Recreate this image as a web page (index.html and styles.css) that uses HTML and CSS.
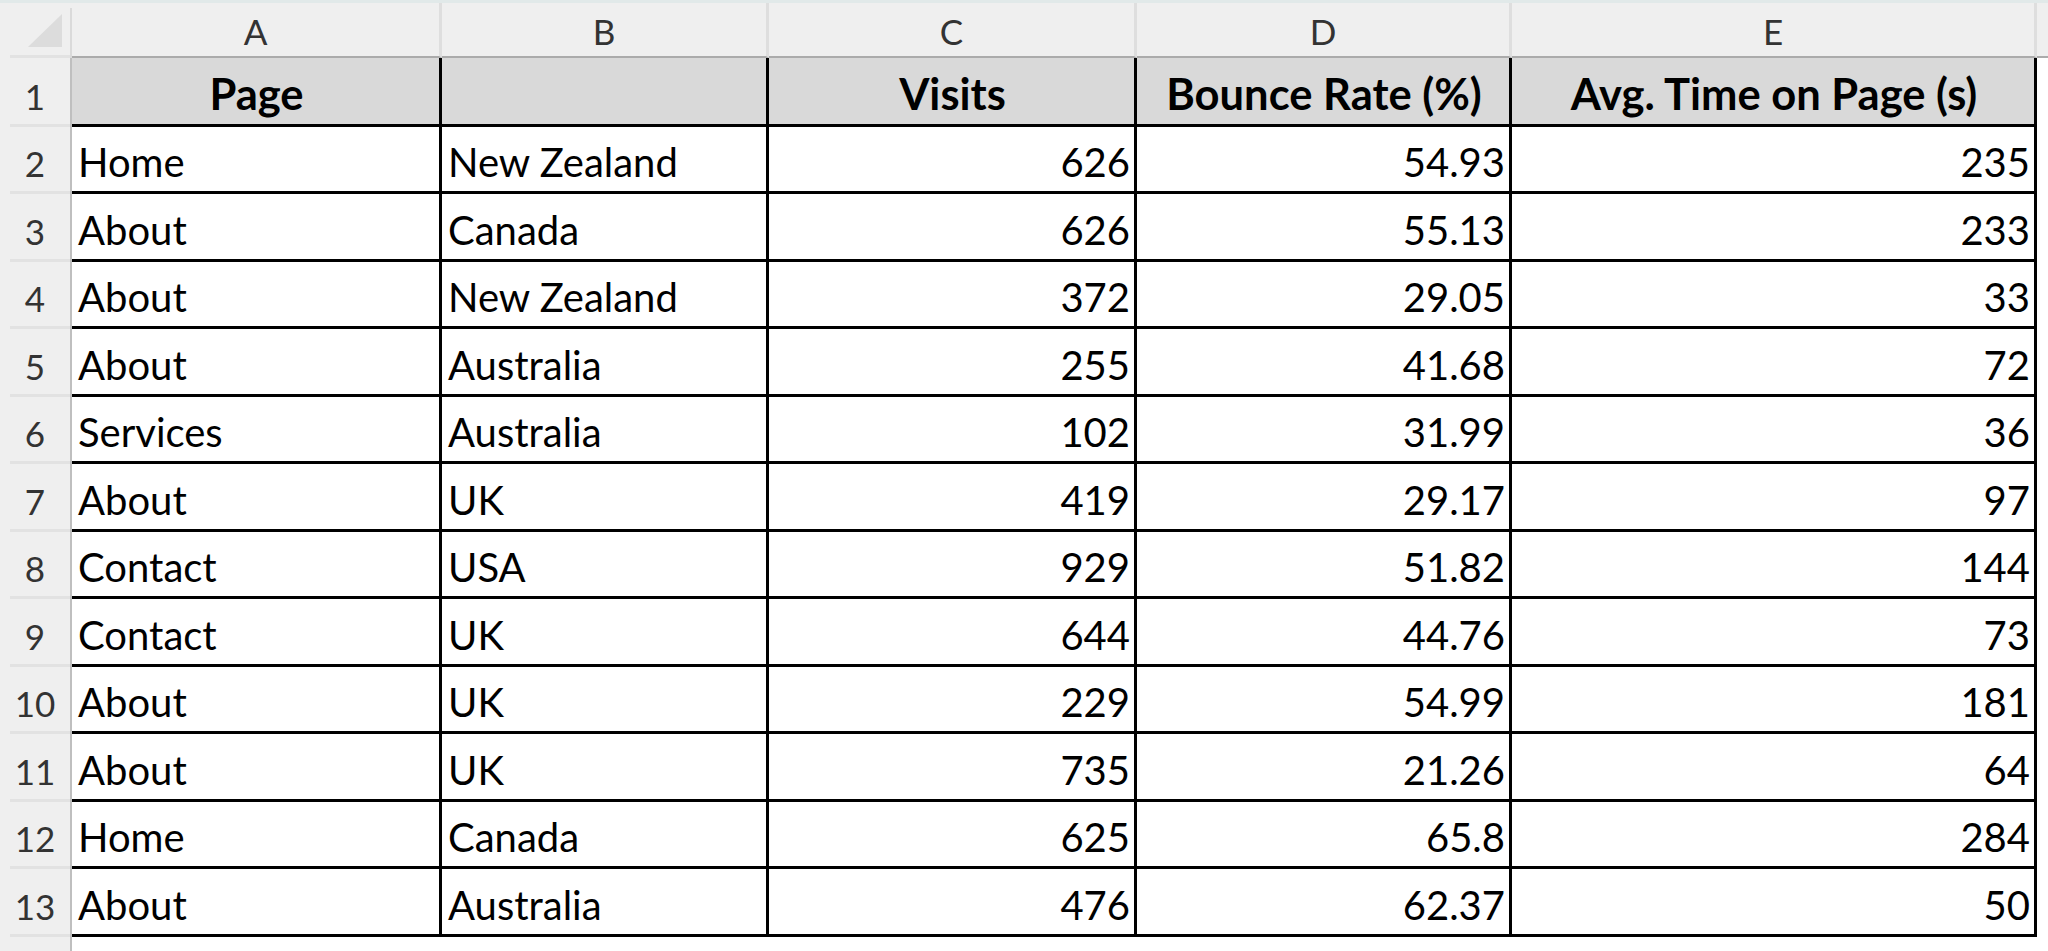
FILE: index.html
```html
<!DOCTYPE html>
<html lang="en">
<head>
<meta charset="utf-8">
<title>Sheet</title>
<link rel="stylesheet" href="styles.css">
</head>
<body>
<div class="strip"></div>
<div class="sheet">
  <div class="corner">
    <svg class="corner-art" width="72" height="55" viewBox="0 0 72 55">
      <polygon points="28,44 62,11 62,44" fill="#dcdcdc"/>
      <rect x="10" y="52" width="60" height="3" fill="#e2e2e2"/>
      <rect x="70" y="5" width="2" height="50" fill="#dadada"/>
    </svg>
  </div>
  <div class="colhead">A</div>
  <div class="colhead">B</div>
  <div class="colhead">C</div>
  <div class="colhead">D</div>
  <div class="colhead">E</div>
  <div class="colhead filler"></div>

  <div class="rowhead">1</div>
  <div class="cell th">Page</div>
  <div class="cell th"></div>
  <div class="cell th">Visits</div>
  <div class="cell th">Bounce Rate (%)</div>
  <div class="cell th">Avg. Time on Page (s)</div>
  <div class="blank"></div>

  <div class="rowhead">2</div>
  <div class="cell">Home</div><div class="cell">New Zealand</div>
  <div class="cell num">626</div><div class="cell num">54.93</div><div class="cell num">235</div>
  <div class="blank"></div>

  <div class="rowhead">3</div>
  <div class="cell">About</div><div class="cell">Canada</div>
  <div class="cell num">626</div><div class="cell num">55.13</div><div class="cell num">233</div>
  <div class="blank"></div>

  <div class="rowhead">4</div>
  <div class="cell">About</div><div class="cell">New Zealand</div>
  <div class="cell num">372</div><div class="cell num">29.05</div><div class="cell num">33</div>
  <div class="blank"></div>

  <div class="rowhead">5</div>
  <div class="cell">About</div><div class="cell">Australia</div>
  <div class="cell num">255</div><div class="cell num">41.68</div><div class="cell num">72</div>
  <div class="blank"></div>

  <div class="rowhead">6</div>
  <div class="cell">Services</div><div class="cell">Australia</div>
  <div class="cell num">102</div><div class="cell num">31.99</div><div class="cell num">36</div>
  <div class="blank"></div>

  <div class="rowhead">7</div>
  <div class="cell">About</div><div class="cell">UK</div>
  <div class="cell num">419</div><div class="cell num">29.17</div><div class="cell num">97</div>
  <div class="blank"></div>

  <div class="rowhead">8</div>
  <div class="cell">Contact</div><div class="cell">USA</div>
  <div class="cell num">929</div><div class="cell num">51.82</div><div class="cell num">144</div>
  <div class="blank"></div>

  <div class="rowhead">9</div>
  <div class="cell">Contact</div><div class="cell">UK</div>
  <div class="cell num">644</div><div class="cell num">44.76</div><div class="cell num">73</div>
  <div class="blank"></div>

  <div class="rowhead">10</div>
  <div class="cell">About</div><div class="cell">UK</div>
  <div class="cell num">229</div><div class="cell num">54.99</div><div class="cell num">181</div>
  <div class="blank"></div>

  <div class="rowhead">11</div>
  <div class="cell">About</div><div class="cell">UK</div>
  <div class="cell num">735</div><div class="cell num">21.26</div><div class="cell num">64</div>
  <div class="blank"></div>

  <div class="rowhead">12</div>
  <div class="cell">Home</div><div class="cell">Canada</div>
  <div class="cell num">625</div><div class="cell num">65.8</div><div class="cell num">284</div>
  <div class="blank"></div>

  <div class="rowhead">13</div>
  <div class="cell">About</div><div class="cell">Australia</div>
  <div class="cell num">476</div><div class="cell num">62.37</div><div class="cell num">50</div>
  <div class="blank"></div>

  <div class="rowhead tail"></div>
  <div class="blank tail-fill"></div>
</div>
</body>
</html>
```
FILE: styles.css
```css
html, body {
  margin: 0;
  padding: 0;
}

body {
  width: 2048px;
  height: 951px;
  overflow: hidden;
  display: flex;
  flex-direction: column;
  background: #ffffff;
  font-family: Lato, "Liberation Sans", sans-serif;
  color: #000;
}

.strip {
  flex: none;
  height: 3px;
  background: #e1e9e9;
}

.sheet {
  flex: 1;
  display: grid;
  grid-template-columns: 72px 370px 327px 368px 375px 525px 1fr;
  grid-template-rows: 55px 68.5px repeat(12, 67.5px) 1fr;
}

.corner {
  background: #efefef;
}

.corner-art {
  display: block;
}

.colhead {
  box-sizing: border-box;
  background: #efefef;
  border-right: 3px solid #dedede;
  border-bottom: 2px solid #ababab;
  display: flex;
  align-items: flex-end;
  justify-content: center;
  padding-bottom: 7px;
  font-size: 35px;
  line-height: 1;
  color: #333;
}

.colhead.filler {
  border-right: none;
}

.rowhead {
  position: relative;
  box-sizing: border-box;
  background: #efefef;
  border-right: 2px solid #bfbfbf;
  display: flex;
  align-items: flex-end;
  justify-content: center;
  padding-bottom: 13px;
  font-size: 35px;
  line-height: 1;
  color: #333;
}

.rowhead::after {
  content: "";
  position: absolute;
  left: 10px;
  right: 0;
  bottom: 0;
  height: 3px;
  background: #e2e2e2;
}

.rowhead.tail::after {
  display: none;
}

.cell {
  box-sizing: border-box;
  border-right: 3px solid #000;
  border-bottom: 3px solid #000;
  display: flex;
  align-items: flex-end;
  padding: 0 4px 9px 6px;
  font-size: 40px;
  line-height: 1;
  white-space: nowrap;
  overflow: hidden;
}

.th {
  background: #d9d9d9;
  font-weight: 700;
  font-size: 43.5px;
  justify-content: center;
  padding-bottom: 8px;
}

.num {
  justify-content: flex-end;
}

.blank {
  background: #ffffff;
}

.tail-fill {
  grid-column: 2 / -1;
}
```
